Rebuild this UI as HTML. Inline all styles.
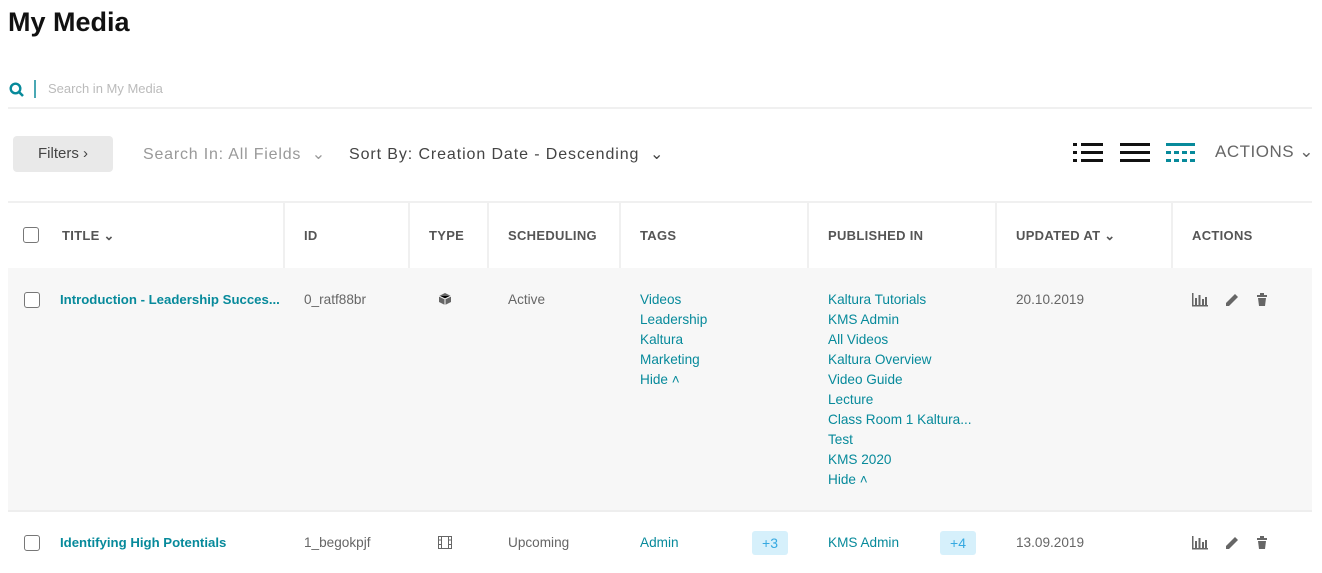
<!DOCTYPE html>
<html><head><style>
body{margin:0;background:#fff;font-family:"Liberation Sans",sans-serif;width:1322px;height:573px;overflow:hidden;position:relative;color:#555}
.a{position:absolute;white-space:nowrap}
.t{color:#078a9b;font-size:13.6px}
.g{color:#666;font-size:13.6px}
.h{font-size:13px;font-weight:bold;color:#555;letter-spacing:.3px}
.vb{position:absolute;width:2px;background:#f0f0f0}
.cb{position:absolute;width:14px;height:14px;border:1px solid #777;border-radius:3px;background:#fff}
.ln div{height:20px;line-height:20px}
.badge{position:absolute;background:#d6f0fb;color:#36a9e1;font-size:14px;border-radius:3px;width:36px;height:24px;line-height:24px;text-align:center}
</style></head><body>
<div class="a" style="left:8px;top:7px;font-size:27px;font-weight:bold;color:#111">My Media</div>
<svg class="a" style="left:9px;top:82px" width="16" height="16" viewBox="0 0 16 16"><circle cx="6.5" cy="6.5" r="4.8" fill="none" stroke="#078a9b" stroke-width="2.4"/><path d="M10 10l4 4" stroke="#078a9b" stroke-width="2.6"/></svg>
<div class="a" style="left:34px;top:80px;width:2px;height:18px;background:#4aa8b4"></div>
<div class="a" style="left:48px;top:81px;font-size:13px;color:#bbb">Search in My Media</div>
<div class="a" style="left:8px;top:107px;width:1304px;height:2px;background:#f0f0f0"></div>
<div class="a" style="left:13px;top:136px;width:100px;height:36px;background:#e9e9e9;border-radius:4px;font-size:15px;color:#444;line-height:36px;text-align:center">Filters ›</div>
<div class="a" style="left:143px;top:144px;font-size:16px;color:#999;letter-spacing:.8px">Search In: All Fields &nbsp;⌄</div>
<div class="a" style="left:349px;top:144px;font-size:16px;color:#444;letter-spacing:.9px">Sort By: Creation Date - Descending &nbsp;⌄</div>
<svg class="a" style="left:1073px;top:143px" width="32" height="22"><g fill="#111"><rect x="0" y="0" width="4" height="3"/><rect x="0" y="8" width="4" height="3"/><rect x="0" y="16" width="4" height="3"/><rect x="8" y="0" width="22" height="3"/><rect x="8" y="8" width="22" height="3"/><rect x="8" y="16" width="22" height="3"/></g></svg>
<svg class="a" style="left:1120px;top:143px" width="32" height="22"><g fill="#111"><rect x="0" y="0" width="30" height="3"/><rect x="0" y="8" width="30" height="3"/><rect x="0" y="16" width="30" height="3"/></g></svg>
<svg class="a" style="left:1166px;top:143px" width="32" height="22"><g fill="#078a9b"><rect x="0" y="0" width="29" height="3"/><rect x="0" y="8" width="5" height="3"/><rect x="8" y="8" width="5" height="3"/><rect x="16" y="8" width="5" height="3"/><rect x="24" y="8" width="5" height="3"/><rect x="0" y="16" width="5" height="3"/><rect x="8" y="16" width="5" height="3"/><rect x="16" y="16" width="5" height="3"/><rect x="24" y="16" width="5" height="3"/></g></svg>
<div class="a" style="left:1215px;top:142px;font-size:17px;color:#666;letter-spacing:.5px">ACTIONS ⌄</div>
<div class="a" style="left:8px;top:201px;width:1304px;height:2px;background:#f0f0f0"></div>
<div class="vb" style="left:283px;top:203px;height:65px"></div>
<div class="vb" style="left:408px;top:203px;height:65px"></div>
<div class="vb" style="left:487px;top:203px;height:65px"></div>
<div class="vb" style="left:619px;top:203px;height:65px"></div>
<div class="vb" style="left:807px;top:203px;height:65px"></div>
<div class="vb" style="left:995px;top:203px;height:65px"></div>
<div class="vb" style="left:1171px;top:203px;height:65px"></div>
<div class="cb" style="left:23px;top:227px"></div>
<div class="a h" style="left:62px;top:228px">TITLE ⌄</div>
<div class="a h" style="left:304px;top:228px">ID</div>
<div class="a h" style="left:429px;top:228px">TYPE</div>
<div class="a h" style="left:508px;top:228px">SCHEDULING</div>
<div class="a h" style="left:640px;top:228px">TAGS</div>
<div class="a h" style="left:828px;top:228px">PUBLISHED IN</div>
<div class="a h" style="left:1016px;top:228px">UPDATED AT ⌄</div>
<div class="a h" style="left:1192px;top:228px">ACTIONS</div>
<div class="a" style="left:8px;top:268px;width:1304px;height:242px;background:#f7f7f7;border-bottom:2px solid #eee"></div>
<div class="cb" style="left:24px;top:292px"></div>
<div class="a t" style="left:60px;top:292px;font-weight:bold;font-size:13.2px">Introduction - Leadership Succes...</div>
<div class="a g" style="left:304px;top:292px">0_ratf88br</div>
<svg class="a" style="left:438px;top:292px" width="14" height="14" viewBox="0 0 14 14"><path d="M7 1l6 3v6l-6 3-6-3V4z" fill="#666"/><path d="M1 4l6 3 6-3M7 7v6" stroke="#f7f7f7" stroke-width="1"/></svg>
<div class="a g" style="left:508px;top:292px">Active</div>
<div class="a t ln" style="left:640px;top:290px"><div>Videos</div><div>Leadership</div><div>Kaltura</div><div>Marketing</div><div>Hide ˄</div></div>
<div class="a t ln" style="left:828px;top:290px"><div>Kaltura Tutorials</div><div>KMS Admin</div><div>All Videos</div><div>Kaltura Overview</div><div>Video Guide</div><div>Lecture</div><div>Class Room 1 Kaltura...</div><div>Test</div><div>KMS 2020</div><div>Hide ˄</div></div>
<div class="a g" style="left:1016px;top:292px">20.10.2019</div>
<svg class="a" style="left:1192px;top:292px" width="80" height="16"><g fill="#666"><path d="M0 1h1.5v12H16v1.5H0z"/><rect x="3" y="6" width="2" height="7"/><rect x="6.5" y="3" width="2" height="10"/><rect x="10" y="7" width="2" height="6"/><rect x="13" y="5" width="2" height="8"/><path d="M34 11l9-9 3 3-9 9h-3z"/><path d="M65 3h10v2H65zM68 1h4v2h-4zM66 6h8l-1 8h-6z"/></g></svg>
<div class="cb" style="left:24px;top:535px"></div>
<div class="a t" style="left:60px;top:535px;font-weight:bold;font-size:13.2px">Identifying High Potentials</div>
<div class="a g" style="left:304px;top:535px">1_begokpjf</div>
<svg class="a" style="left:438px;top:536px" width="14" height="13"><rect x="0.5" y="0.5" width="13" height="12" fill="none" stroke="#666"/><rect x="3" y="1" width="1" height="11" fill="#666"/><rect x="10" y="1" width="1" height="11" fill="#666"/><rect x="0" y="3.5" width="3" height="1" fill="#666"/><rect x="0" y="8" width="3" height="1" fill="#666"/><rect x="11" y="3.5" width="3" height="1" fill="#666"/><rect x="11" y="8" width="3" height="1" fill="#666"/></svg>
<div class="a g" style="left:508px;top:535px">Upcoming</div>
<div class="a t" style="left:640px;top:535px">Admin</div>
<div class="badge" style="left:752px;top:531px">+3</div>
<div class="a t" style="left:828px;top:535px">KMS Admin</div>
<div class="badge" style="left:940px;top:531px">+4</div>
<div class="a g" style="left:1016px;top:535px">13.09.2019</div>
<svg class="a" style="left:1192px;top:535px" width="80" height="16"><g fill="#666"><path d="M0 1h1.5v12H16v1.5H0z"/><rect x="3" y="6" width="2" height="7"/><rect x="6.5" y="3" width="2" height="10"/><rect x="10" y="7" width="2" height="6"/><rect x="13" y="5" width="2" height="8"/><path d="M34 11l9-9 3 3-9 9h-3z"/><path d="M65 3h10v2H65zM68 1h4v2h-4zM66 6h8l-1 8h-6z"/></g></svg>
</body></html>
